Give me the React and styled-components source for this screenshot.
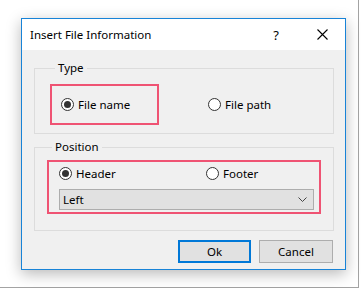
import React from "react";
import styled, { createGlobalStyle } from "styled-components";

const Global = createGlobalStyle`
  * { box-sizing: border-box; }
  html, body { margin: 0; padding: 0; background: #ffffff; }
  body { font-family: "Noto Sans", "Open Sans", Arial, sans-serif; font-size: 11.5px; color: #000; }
`;

const Frame = styled.div`
  width: 359px;
  height: 288px;
  padding: 18px 0 0 21px;
  border-right: 1px solid #a3a3a3;
  border-bottom: 1px solid #a3a3a3;
  background: #fff;
`;

const Dialog = styled.div`
  width: 325px;
  height: 252px;
  border: 1px solid #1883d7;
  background: #f0f0f0;
  box-shadow: 0 4px 14px rgba(0, 0, 0, 0.28);
  display: flex;
  flex-direction: column;
`;

const TitleBar = styled.div`
  height: 31px;
  background: #fff;
  display: flex;
  align-items: center;
  padding-left: 8px;
`;

const Title = styled.div`
  flex: 1;
  font-size: 11.5px;
  color: #000;
`;

const TitleButton = styled.div`
  width: 46px;
  height: 31px;
  display: flex;
  align-items: center;
  justify-content: center;
  font-size: 13px;
  color: #000;
`;

const Body = styled.div`
  flex: 1;
  display: flex;
  flex-direction: column;
  padding: 0 11px 0 12px;
`;

const Group = styled.fieldset`
  margin: ${(p) => p.$mt}px 0 0 0;
  padding: ${(p) => p.$pt}px 0 0 ${(p) => p.$pl}px;
  min-width: 0;
  height: ${(p) => p.$h}px;
  border: 1px solid #dcdcdc;
`;

const Legend = styled.legend`
  margin-left: 5px;
  padding: 0 3px;
  font-size: 11.5px;
  line-height: 16px;
  color: #000;
`;

const TypeRow = styled.div`
  display: flex;
  align-items: center;
  gap: 49px;
`;

const Highlight = styled.div`
  border: 2px solid #ef5373;
  width: ${(p) => p.$w}px;
  height: ${(p) => p.$h}px;
  padding: ${(p) => p.$pad};
  display: flex;
  flex-direction: ${(p) => (p.$column ? "column" : "row")};
  align-items: ${(p) => (p.$column ? "stretch" : "center")};
`;

const RadioLabel = styled.label`
  display: flex;
  align-items: center;
  gap: 4px;
  height: 16px;
  font-size: 11.5px;
  color: #000;
`;

const Circle = styled.span`
  width: 13px;
  height: 13px;
  border-radius: 50%;
  border: 1px solid #333;
  background: #fff;
  display: flex;
  align-items: center;
  justify-content: center;
  &::after {
    content: "";
    width: 7px;
    height: 7px;
    border-radius: 50%;
    background: #333;
    display: ${(p) => (p.$checked ? "block" : "none")};
  }
`;

const RadioGrid = styled.div`
  display: grid;
  grid-template-columns: 147px auto;
  padding-left: 10px;
`;

const Select = styled.div`
  margin: 8px 5px 0 10px;
  height: 21px;
  border: 1px solid #adadad;
  background: #e1e1e1;
  display: flex;
  align-items: center;
  justify-content: space-between;
  padding: 0 6px 0 3px;
  font-size: 11.5px;
`;

const ButtonRow = styled.div`
  display: flex;
  justify-content: flex-end;
  gap: 8px;
  margin-top: 9px;
  padding-right: 1px;
`;

const Button = styled.div`
  width: ${(p) => p.$w}px;
  height: 23px;
  background: #e1e1e1;
  border: ${(p) => (p.$default ? "2px solid #0078d7" : "1px solid #adadad")};
  display: flex;
  align-items: center;
  justify-content: center;
  font-size: 11.5px;
  color: #000;
`;

const Radio = ({ checked, children }) => (
  <RadioLabel>
    <Circle $checked={checked} />
    {children}
  </RadioLabel>
);

export default function App() {
  return (
    <>
      <Global />
      <Frame>
        <Dialog>
          <TitleBar>
            <Title>Insert File Information</Title>
            <TitleButton>?</TitleButton>
            <TitleButton>
              <svg width="11" height="11" viewBox="0 0 11 11">
                <path d="M0.5 0.5 L10.5 10.5 M10.5 0.5 L0.5 10.5" stroke="#000" strokeWidth="1.1" fill="none" />
              </svg>
            </TitleButton>
          </TitleBar>
          <Body>
            <Group $mt={10} $pt={8} $pl={15} $h={74}>
              <Legend>Type</Legend>
              <TypeRow>
                <Highlight $w={109} $h={41} $pad="0 0 0 9px">
                  <Radio checked>File name</Radio>
                </Highlight>
                <Radio>File path</Radio>
              </TypeRow>
            </Group>
            <Group $mt={5} $pt={5} $pl={12} $h={92}>
              <Legend>Position</Legend>
              <Highlight $w={274} $h={54} $pad="3px 0 2px 0" $column>
                <RadioGrid>
                  <Radio checked>Header</Radio>
                  <Radio>Footer</Radio>
                </RadioGrid>
                <Select>
                  <span>Left</span>
                  <svg width="9" height="5" viewBox="0 0 9 5">
                    <path d="M0.5 0.5 L4.5 4.5 L8.5 0.5" stroke="#444" strokeWidth="1" fill="none" />
                  </svg>
                </Select>
              </Highlight>
            </Group>
            <ButtonRow>
              <Button $w={73} $default>Ok</Button>
              <Button $w={74}>Cancel</Button>
            </ButtonRow>
          </Body>
        </Dialog>
      </Frame>
    </>
  );
}
